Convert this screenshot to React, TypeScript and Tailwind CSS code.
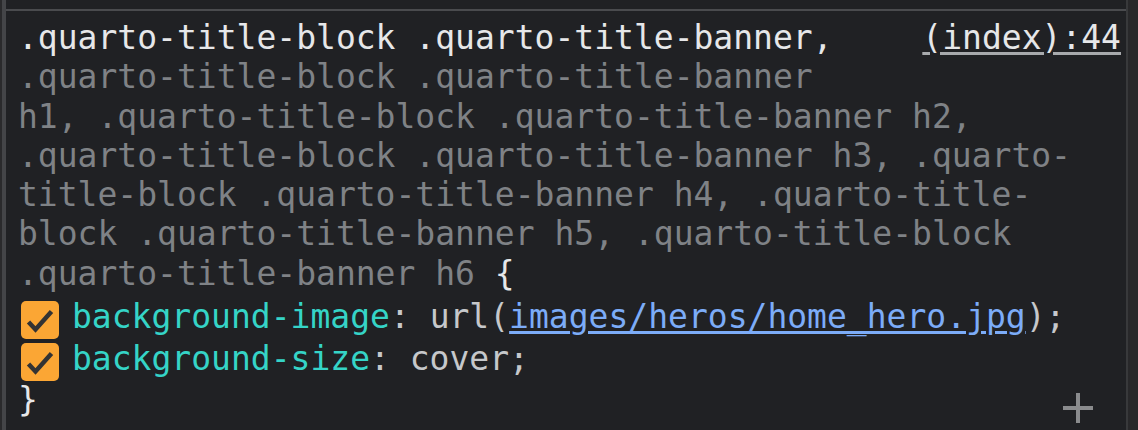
const selectorLines = [
  "h1, .quarto-title-block .quarto-title-banner h2,",
  ".quarto-title-block .quarto-title-banner h3, .quarto-",
  "title-block .quarto-title-banner h4, .quarto-title-",
  "block .quarto-title-banner h5, .quarto-title-block",
];

const CheckBox = () => (
  <div className="mt-[5px] ml-[3px] mr-[13px] h-[38px] w-[38px] shrink-0 rounded-[5px] bg-[#fba634]">
    <svg viewBox="0 0 38 38" className="h-[38px] w-[38px]">
      <path d="M7.5 21 L14.5 28.5 L30.5 10.5" fill="none" stroke="#333333" strokeWidth="4.5" />
    </svg>
  </div>
);

const App = () => {
  return (
    <div
      className="flex h-[430px] w-[1138px] overflow-hidden bg-[#202124] text-[33px] leading-[39.3px]"
      style={{ fontFamily: '"DejaVu Sans Mono", monospace' }}
    >
      <div className="flex w-[6px] shrink-0">
        <div className="w-[2px] bg-[#2a2a2c]" />
        <div className="w-[4px] bg-[#444548]" />
      </div>

      <div className="relative flex-1 pt-[9px]">
        <div className="border-t-2 border-[#4a4b4e] pt-[7px] pr-[5px] pl-[12px]">
          <div className="flex justify-between whitespace-pre">
            <span className="text-[#e6e7e9]">.quarto-title-block .quarto-title-banner,</span>
            <span className="text-[#e6e7e9] underline decoration-[#a8aaad] decoration-[3px] underline-offset-[3px]">
              (index):44
            </span>
          </div>
          <div className="whitespace-pre text-[#7f8286]">.quarto-title-block .quarto-title-banner</div>
          {selectorLines.map(line => (
            <div key={line} className="whitespace-pre text-[#7f8286]">
              {line}
            </div>
          ))}
          <div className="whitespace-pre text-[#7f8286]">
            .quarto-title-banner h6 <span className="text-[#e6e7e9]">{"{"}</span>
          </div>

          <div className="mt-[3px] flex h-[42px] whitespace-pre leading-[42px]">
            <CheckBox />
            <span className="text-[#35d4c7]">background-image</span>
            <span className="text-[#c6c8cb]">: url(</span>
            <span className="text-[#7cacf8] underline decoration-[2.5px] underline-offset-[3px]">
              images/heros/home_hero.jpg
            </span>
            <span className="text-[#c6c8cb]">);</span>
          </div>
          <div className="flex h-[42px] whitespace-pre leading-[42px]">
            <CheckBox />
            <span className="text-[#35d4c7]">background-size</span>
            <span className="text-[#c6c8cb]">: cover;</span>
          </div>
          <div className="text-[#e6e7e9]">{"}"}</div>
        </div>

        <button className="absolute top-[393px] right-[33px] h-[30px] w-[30px]">
          <svg viewBox="0 0 30 30" className="h-[30px] w-[30px]">
            <path d="M15 0 V30 M0 15 H30" stroke="#8a8b8d" strokeWidth="4" />
          </svg>
        </button>
      </div>

      <div className="w-[2px] shrink-0 bg-[#38393b]" />
      <div className="w-[10px] shrink-0 bg-[#28282a]" />
    </div>
  );
};

export default App;
